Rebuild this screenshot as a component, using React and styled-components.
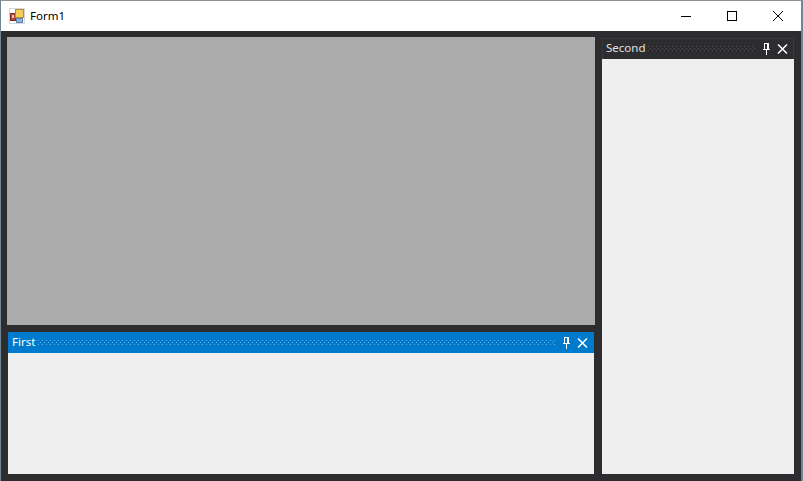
import React from 'react'
import styled, { createGlobalStyle } from 'styled-components'

const GlobalStyle = createGlobalStyle`
  html, body {
    margin: 0;
    padding: 0;
    background: #2d2d30;
  }
`

function AppIcon() {
    return (
        <svg width="16" height="16" viewBox="0 0 16 16">
            <rect x="0.5" y="0.5" width="15" height="15" fill="#fff" stroke="#d8d8d8" />
            <rect x="1.5" y="5.5" width="5" height="7" fill="#b8443c" stroke="#7d2f2a" />
            <rect x="3" y="7" width="2" height="3" fill="#e8c8c0" />
            <rect x="6.5" y="1.5" width="8" height="8" fill="#f5cf5a" stroke="#b98f2f" />
            <rect x="7.5" y="10.5" width="6" height="4" fill="#8fb2dc" stroke="#5f86b8" />
        </svg>
    )
}

function PinIcon() {
    return (
        <svg width="9" height="12" viewBox="0 0 9 12">
            <path d="M2 .5h5M2.5 .5v6M5.5 .5v6M6.5 .5v6M1 6.5h7M4.5 7v5" fill="none" stroke="#fff" strokeWidth="1" />
        </svg>
    )
}

function CloseIcon() {
    return (
        <svg width="11" height="10" viewBox="0 0 11 10">
            <path d="M1 .5l9 9M10 .5l-9 9" fill="none" stroke="#fff" strokeWidth="1.5" />
        </svg>
    )
}

function DockPanel({ title, active }) {
    return (
        <Panel>
            <PanelHeader $active={active}>
                <PanelTitle>{title}</PanelTitle>
                <Grip $active={active} />
                <PanelButtons>
                    <PinIcon />
                    <CloseIcon />
                </PanelButtons>
            </PanelHeader>
            <PanelBody />
        </Panel>
    )
}

function App() {
    return (
        <Window>
            <GlobalStyle />
            <TitleBar>
                <TitleLeft>
                    <AppIcon />
                    <TitleText>Form1</TitleText>
                </TitleLeft>
                <Controls>
                    <ControlButton>
                        <svg width="10" height="10" viewBox="0 0 10 10">
                            <path d="M0 5.5h10" stroke="#000" fill="none" />
                        </svg>
                    </ControlButton>
                    <ControlButton>
                        <svg width="10" height="10" viewBox="0 0 10 10">
                            <rect x="0.5" y="0.5" width="9" height="9" stroke="#000" fill="none" />
                        </svg>
                    </ControlButton>
                    <ControlButton>
                        <svg width="10" height="10" viewBox="0 0 10 10">
                            <path d="M0 0l10 10M10 0L0 10" stroke="#000" fill="none" />
                        </svg>
                    </ControlButton>
                </Controls>
            </TitleBar>
            <Client>
                <LeftColumn>
                    <DocumentArea />
                    <LowerDock>
                        <DockPanel title="First" active />
                    </LowerDock>
                </LeftColumn>
                <RightDock>
                    <DockPanel title="Second" />
                </RightDock>
            </Client>
        </Window>
    )
}

export default App

const Window = styled.div`
    width: 803px;
    height: 481px;
    box-sizing: border-box;
    display: flex;
    flex-direction: column;
    overflow: hidden;
    background: #2d2d30;
    border-top: 1px solid #8a9499;
    border-left: 1px solid #6f8794;
    border-right: 2px solid #6f8794;
    font-family: "Noto Sans", "Open Sans", sans-serif;
`

const TitleBar = styled.div`
    height: 30px;
    flex: none;
    background: #fff;
    display: flex;
    align-items: center;
    justify-content: space-between;
`

const TitleLeft = styled.div`
    display: flex;
    align-items: center;
    gap: 5px;
    padding-left: 8px;
`

const TitleText = styled.span`
    font-size: 11.5px;
    padding-bottom: 2px;
    color: #000;
`

const Controls = styled.div`
    display: flex;
    height: 100%;
`

const ControlButton = styled.div`
    width: 46px;
    display: flex;
    align-items: center;
    justify-content: center;
`

const Client = styled.div`
    flex: 1;
    display: flex;
    gap: 7px;
    padding: 6px 6px 7px 6px;
    min-height: 0;
`

const LeftColumn = styled.div`
    width: 588px;
    flex: none;
    display: flex;
    flex-direction: column;
    gap: 7px;
`

const DocumentArea = styled.div`
    height: 288px;
    flex: none;
    background: #ababab;
`

const LowerDock = styled.div`
    flex: 1;
    display: flex;
    padding: 0 1px;
    min-height: 0;
`

const RightDock = styled.div`
    width: 192px;
    flex: none;
    display: flex;
    padding-top: 1px;
`

const Panel = styled.div`
    flex: 1;
    display: flex;
    flex-direction: column;
    min-width: 0;
`

const PanelHeader = styled.div`
    height: 21px;
    flex: none;
    display: flex;
    align-items: center;
    box-sizing: border-box;
    padding: 0 4px 0 3px;
    gap: 3px;
    color: ${p => (p.$active ? '#fff' : '#e0e0e0')};
    background: ${p => (p.$active ? '#007acc' : '#2d2d30')};
    border-top: 1px solid ${p => (p.$active ? '#007acc' : '#3a3a3e')};
    border-left: 1px solid ${p => (p.$active ? '#007acc' : '#3a3a3e')};
    border-right: 1px solid ${p => (p.$active ? '#007acc' : '#3a3a3e')};
`

const PanelTitle = styled.span`
    font-size: 11.5px;
    line-height: 18px;
    padding-bottom: 2px;
`

const Grip = styled.div`
    flex: 1;
    height: 6px;
    --dot: ${p => (p.$active ? '#58aee4' : '#4e4e54')};
    background-image:
        radial-gradient(circle at 0.5px 0.5px, var(--dot) 0.7px, transparent 0.8px),
        radial-gradient(circle at 0.5px 0.5px, var(--dot) 0.7px, transparent 0.8px);
    background-size: 4px 4px;
    background-position: 0 0, 2px 2px;
`

const PanelButtons = styled.div`
    display: flex;
    align-items: center;
    gap: 6px;
    padding-left: 4px;
    padding-right: 1px;
`

const PanelBody = styled.div`
    flex: 1;
    background: #efefef;
`
